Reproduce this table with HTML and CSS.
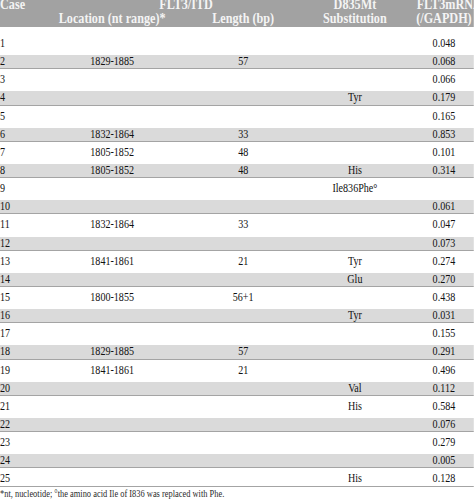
FILE: index.html
```html
<!DOCTYPE html>
<html lang="en">
<head>
<meta charset="utf-8">
<title>FLT3 table</title>
<link rel="stylesheet" href="styles.css">
</head>
<body>
<div class="sheet">
  <div class="head">
    <div class="hrow">
      <span class="c-case">Case</span>
      <span class="c-itd">FLT3/ITD</span>
      <span class="c-sub">D835Mt</span>
      <span class="c-mr top">FLT3mRNA</span>
    </div>
    <div class="hrow">
      <span class="c-case"></span>
      <span class="c-loc">Location (nt range)*</span>
      <span class="c-len">Length (bp)</span>
      <span class="c-sub">Substitution</span>
      <span class="c-mr">(/GAPDH)</span>
    </div>
  </div>
  <div class="rows">
    <div class="row first"><span class="c-case">1</span><span class="c-loc"></span><span class="c-len"></span><span class="c-sub"></span><span class="c-mr">0.048</span></div>
    <div class="row alt"><span class="c-case">2</span><span class="c-loc">1829-1885</span><span class="c-len">57</span><span class="c-sub"></span><span class="c-mr">0.068</span></div>
    <div class="row"><span class="c-case">3</span><span class="c-loc"></span><span class="c-len"></span><span class="c-sub"></span><span class="c-mr">0.066</span></div>
    <div class="row alt"><span class="c-case">4</span><span class="c-loc"></span><span class="c-len"></span><span class="c-sub">Tyr</span><span class="c-mr">0.179</span></div>
    <div class="row"><span class="c-case">5</span><span class="c-loc"></span><span class="c-len"></span><span class="c-sub"></span><span class="c-mr">0.165</span></div>
    <div class="row alt"><span class="c-case">6</span><span class="c-loc">1832-1864</span><span class="c-len">33</span><span class="c-sub"></span><span class="c-mr">0.853</span></div>
    <div class="row"><span class="c-case">7</span><span class="c-loc">1805-1852</span><span class="c-len">48</span><span class="c-sub"></span><span class="c-mr">0.101</span></div>
    <div class="row alt"><span class="c-case">8</span><span class="c-loc">1805-1852</span><span class="c-len">48</span><span class="c-sub">His</span><span class="c-mr">0.314</span></div>
    <div class="row"><span class="c-case">9</span><span class="c-loc"></span><span class="c-len"></span><span class="c-sub">Ile836Phe°</span><span class="c-mr"></span></div>
    <div class="row alt"><span class="c-case">10</span><span class="c-loc"></span><span class="c-len"></span><span class="c-sub"></span><span class="c-mr">0.061</span></div>
    <div class="row"><span class="c-case">11</span><span class="c-loc">1832-1864</span><span class="c-len">33</span><span class="c-sub"></span><span class="c-mr">0.047</span></div>
    <div class="row alt"><span class="c-case">12</span><span class="c-loc"></span><span class="c-len"></span><span class="c-sub"></span><span class="c-mr">0.073</span></div>
    <div class="row"><span class="c-case">13</span><span class="c-loc">1841-1861</span><span class="c-len">21</span><span class="c-sub">Tyr</span><span class="c-mr">0.274</span></div>
    <div class="row alt"><span class="c-case">14</span><span class="c-loc"></span><span class="c-len"></span><span class="c-sub">Glu</span><span class="c-mr">0.270</span></div>
    <div class="row"><span class="c-case">15</span><span class="c-loc">1800-1855</span><span class="c-len">56+1</span><span class="c-sub"></span><span class="c-mr">0.438</span></div>
    <div class="row alt"><span class="c-case">16</span><span class="c-loc"></span><span class="c-len"></span><span class="c-sub">Tyr</span><span class="c-mr">0.031</span></div>
    <div class="row"><span class="c-case">17</span><span class="c-loc"></span><span class="c-len"></span><span class="c-sub"></span><span class="c-mr">0.155</span></div>
    <div class="row alt"><span class="c-case">18</span><span class="c-loc">1829-1885</span><span class="c-len">57</span><span class="c-sub"></span><span class="c-mr">0.291</span></div>
    <div class="row"><span class="c-case">19</span><span class="c-loc">1841-1861</span><span class="c-len">21</span><span class="c-sub"></span><span class="c-mr">0.496</span></div>
    <div class="row alt"><span class="c-case">20</span><span class="c-loc"></span><span class="c-len"></span><span class="c-sub">Val</span><span class="c-mr">0.112</span></div>
    <div class="row"><span class="c-case">21</span><span class="c-loc"></span><span class="c-len"></span><span class="c-sub">His</span><span class="c-mr">0.584</span></div>
    <div class="row alt"><span class="c-case">22</span><span class="c-loc"></span><span class="c-len"></span><span class="c-sub"></span><span class="c-mr">0.076</span></div>
    <div class="row"><span class="c-case">23</span><span class="c-loc"></span><span class="c-len"></span><span class="c-sub"></span><span class="c-mr">0.279</span></div>
    <div class="row alt"><span class="c-case">24</span><span class="c-loc"></span><span class="c-len"></span><span class="c-sub"></span><span class="c-mr">0.005</span></div>
    <div class="row last"><span class="c-case">25</span><span class="c-loc"></span><span class="c-len"></span><span class="c-sub">His</span><span class="c-mr">0.128</span></div>
  </div>
  <p class="note">*nt, nucleotide; °the amino acid Ile of I836 was replaced with Phe.</p>
</div>
</body>
</html>
```
FILE: styles.css
```css
html, body {
  margin: 0;
  padding: 0;
  background: #ffffff;
  overflow: hidden;
}

.sheet {
  width: 564px;
  transform: scaleX(0.84);
  transform-origin: 0 0;
  font-family: "Liberation Serif", "Times New Roman", serif;
  color: #111111;
}

.head {
  margin-top: -3px;
  height: 30px;
  background: #a2a2a2;
  color: #f4f4f4;
  font-weight: bold;
  font-size: 14.5px;
}

.hrow,
.row {
  display: grid;
  grid-template-columns: 48px 171px 141px 125px 79px;
  white-space: nowrap;
}

.hrow {
  height: 14px;
  line-height: 14px;
}

.c-case { text-align: left; }
.c-loc { text-align: center; }
.c-len { text-align: center; }
.c-sub { text-align: center; }
.c-mr { text-align: center; padding-left: 8px; }
.c-mr.top { text-align: left; padding-left: 11px; }

.c-itd {
  grid-column: 2 / 4;
  text-align: center;
  padding-left: 35px;
}

.rows {
  font-size: 12px;
}

.row {
  box-sizing: border-box;
  height: 18.15px;
  border-top: 4px solid transparent;
  border-bottom: 1px solid transparent;
  background-clip: padding-box;
  align-items: center;
  line-height: 13px;
}

.row.first {
  height: 24.15px;
  padding-top: 6px;
}

.row.alt {
  background-color: #dadada;
  border-bottom-color: #a4a4a4;
}

.row.last {
  border-bottom-color: #a4a4a4;
}

.note {
  margin: 1px 0 0;
  font-size: 10px;
  line-height: 12px;
  color: #2a2a2a;
}
```
